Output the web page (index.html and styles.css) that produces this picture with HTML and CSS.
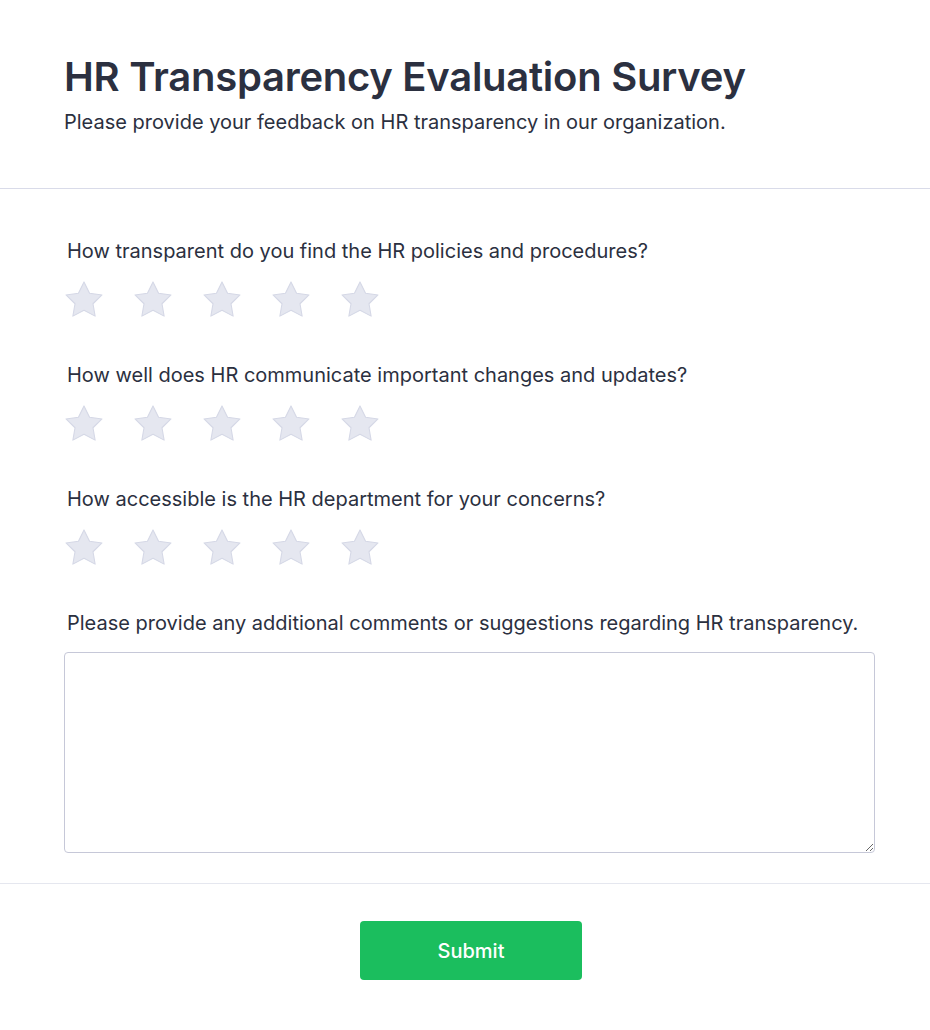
FILE: index.html
```html
<!DOCTYPE html>
<html lang="en">
<head>
<meta charset="utf-8">
<title>HR Transparency Evaluation Survey</title>
<link rel="stylesheet" href="styles.css">
</head>
<body>
<div class="survey">
  <header class="survey-header">
    <h1 class="title">HR Transparency Evaluation Survey</h1>
    <p class="subtitle">Please provide your feedback on HR transparency in our organization.</p>
  </header>
  <main class="survey-body">
    <div class="question">
      <label class="question-label">How transparent do you find the HR policies and procedures?</label>
      <div class="stars">
        <svg class="star" viewBox="1.5 1.5 21 20" aria-hidden="true"><path d="M12 2l3.09 6.26L22 9.27l-5 4.87 1.18 6.88L12 17.77l-6.18 3.25L7 14.14 2 9.27l6.91-1.01L12 2z"/></svg>
        <svg class="star" viewBox="1.5 1.5 21 20" aria-hidden="true"><path d="M12 2l3.09 6.26L22 9.27l-5 4.87 1.18 6.88L12 17.77l-6.18 3.25L7 14.14 2 9.27l6.91-1.01L12 2z"/></svg>
        <svg class="star" viewBox="1.5 1.5 21 20" aria-hidden="true"><path d="M12 2l3.09 6.26L22 9.27l-5 4.87 1.18 6.88L12 17.77l-6.18 3.25L7 14.14 2 9.27l6.91-1.01L12 2z"/></svg>
        <svg class="star" viewBox="1.5 1.5 21 20" aria-hidden="true"><path d="M12 2l3.09 6.26L22 9.27l-5 4.87 1.18 6.88L12 17.77l-6.18 3.25L7 14.14 2 9.27l6.91-1.01L12 2z"/></svg>
        <svg class="star" viewBox="1.5 1.5 21 20" aria-hidden="true"><path d="M12 2l3.09 6.26L22 9.27l-5 4.87 1.18 6.88L12 17.77l-6.18 3.25L7 14.14 2 9.27l6.91-1.01L12 2z"/></svg>
      </div>
    </div>
    <div class="question">
      <label class="question-label">How well does HR communicate important changes and updates?</label>
      <div class="stars">
        <svg class="star" viewBox="1.5 1.5 21 20" aria-hidden="true"><path d="M12 2l3.09 6.26L22 9.27l-5 4.87 1.18 6.88L12 17.77l-6.18 3.25L7 14.14 2 9.27l6.91-1.01L12 2z"/></svg>
        <svg class="star" viewBox="1.5 1.5 21 20" aria-hidden="true"><path d="M12 2l3.09 6.26L22 9.27l-5 4.87 1.18 6.88L12 17.77l-6.18 3.25L7 14.14 2 9.27l6.91-1.01L12 2z"/></svg>
        <svg class="star" viewBox="1.5 1.5 21 20" aria-hidden="true"><path d="M12 2l3.09 6.26L22 9.27l-5 4.87 1.18 6.88L12 17.77l-6.18 3.25L7 14.14 2 9.27l6.91-1.01L12 2z"/></svg>
        <svg class="star" viewBox="1.5 1.5 21 20" aria-hidden="true"><path d="M12 2l3.09 6.26L22 9.27l-5 4.87 1.18 6.88L12 17.77l-6.18 3.25L7 14.14 2 9.27l6.91-1.01L12 2z"/></svg>
        <svg class="star" viewBox="1.5 1.5 21 20" aria-hidden="true"><path d="M12 2l3.09 6.26L22 9.27l-5 4.87 1.18 6.88L12 17.77l-6.18 3.25L7 14.14 2 9.27l6.91-1.01L12 2z"/></svg>
      </div>
    </div>
    <div class="question">
      <label class="question-label">How accessible is the HR department for your concerns?</label>
      <div class="stars">
        <svg class="star" viewBox="1.5 1.5 21 20" aria-hidden="true"><path d="M12 2l3.09 6.26L22 9.27l-5 4.87 1.18 6.88L12 17.77l-6.18 3.25L7 14.14 2 9.27l6.91-1.01L12 2z"/></svg>
        <svg class="star" viewBox="1.5 1.5 21 20" aria-hidden="true"><path d="M12 2l3.09 6.26L22 9.27l-5 4.87 1.18 6.88L12 17.77l-6.18 3.25L7 14.14 2 9.27l6.91-1.01L12 2z"/></svg>
        <svg class="star" viewBox="1.5 1.5 21 20" aria-hidden="true"><path d="M12 2l3.09 6.26L22 9.27l-5 4.87 1.18 6.88L12 17.77l-6.18 3.25L7 14.14 2 9.27l6.91-1.01L12 2z"/></svg>
        <svg class="star" viewBox="1.5 1.5 21 20" aria-hidden="true"><path d="M12 2l3.09 6.26L22 9.27l-5 4.87 1.18 6.88L12 17.77l-6.18 3.25L7 14.14 2 9.27l6.91-1.01L12 2z"/></svg>
        <svg class="star" viewBox="1.5 1.5 21 20" aria-hidden="true"><path d="M12 2l3.09 6.26L22 9.27l-5 4.87 1.18 6.88L12 17.77l-6.18 3.25L7 14.14 2 9.27l6.91-1.01L12 2z"/></svg>
      </div>
    </div>
    <div class="question comments">
      <label class="question-label" for="comments">Please provide any additional comments or suggestions regarding HR transparency.</label>
      <textarea id="comments" class="comment-box"></textarea>
    </div>
  </main>
  <footer class="survey-footer">
    <button class="submit-btn" type="button">Submit</button>
  </footer>
</div>
</body>
</html>
```

FILE: styles.css
```css
* { box-sizing: border-box; }

html, body {
  margin: 0;
  padding: 0;
  background: #ffffff;
}

body {
  font-family: Inter, "Noto Sans", "Liberation Sans", sans-serif;
  color: #2b3040;
}

.survey-header {
  padding: 53px 64px 52px;
  border-bottom: 1px solid #d9dbe9;
}

.title {
  margin: 0;
  font-size: 40px;
  line-height: 48px;
  font-weight: 600;
  letter-spacing: -0.27px;
  color: #2b3040;
}

.subtitle {
  margin: 7px 0 0;
  font-size: 20px;
  line-height: 28px;
  font-weight: 400;
  color: #2b3040;
}

.survey-body {
  padding: 48px 55px 30px 64px;
  border-bottom: 1px solid #e5e7ef;
}

.question {
  display: flex;
  flex-direction: column;
  margin-bottom: 44px;
}

.question-label {
  display: block;
  padding-left: 3px;
  font-size: 20px;
  line-height: 28px;
  font-weight: 400;
  color: #2b3040;
}

.stars {
  display: flex;
  gap: 31px;
  margin-top: 16px;
  padding-left: 1px;
}

.star {
  width: 38px;
  height: 36px;
  fill: #e5e7f0;
  stroke: #d5d8e6;
  stroke-width: 0.6;
  stroke-linejoin: round;
}

.comments {
  margin-bottom: 0;
}

.comment-box {
  display: block;
  margin-top: 15px;
  width: 100%;
  height: 201px;
  border: 1px solid #c6c8d8;
  border-radius: 4px;
  font-family: inherit;
  font-size: 16px;
  resize: vertical;
}

.survey-footer {
  display: flex;
  justify-content: center;
  padding: 37px 0 40px 12px;
}

.submit-btn {
  width: 222px;
  height: 59px;
  border: none;
  border-radius: 4px;
  background: #1bbe5e;
  color: #ffffff;
  font-family: inherit;
  font-size: 20px;
  font-weight: 500;
  cursor: pointer;
}
```
